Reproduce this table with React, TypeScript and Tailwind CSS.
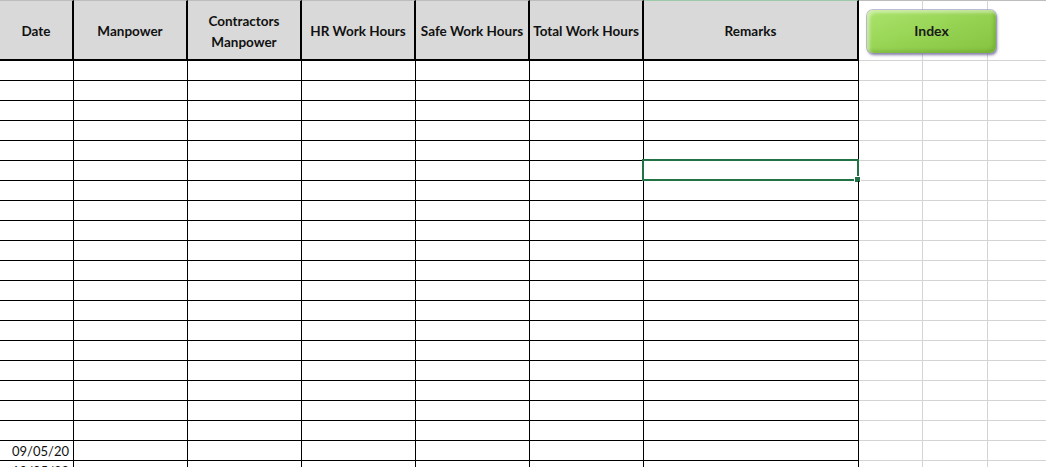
import React from 'react';

const headers = [
  'Date',
  'Manpower',
  'Contractors Manpower',
  'HR Work Hours',
  'Safe Work Hours',
  'Total Work Hours',
  'Remarks',
];

const ROWS = 21;

export default function App() {
  const rows = Array.from({ length: ROWS }, (_, i) => i);

  return (
    <div className="relative w-[1046px] h-[467px] overflow-hidden bg-white font-['Lato',sans-serif] text-[#111]">
      <div className="grid grid-cols-[74px_114px_114px_114px_114px_114px_215px_64px_65px_1fr]">
        {/* Header row */}
        {headers.map((h, i) => (
          <div
            key={h}
            className={`h-[61px] pt-[3px] flex items-center justify-center text-center text-[13.5px] font-bold leading-[21px] bg-[#d9d9d9] border-b-2 border-r-2 border-b-black border-r-black border-t ${
              i === 6 ? 'border-t-[#9cc9a8]' : 'border-t-[#bdbdbd]'
            } ${i === 2 ? 'px-3' : ''}`}
          >
            {h}
          </div>
        ))}
        <div className="h-[61px] border-t border-t-[#bdbdbd] border-b border-r border-[#d4d4d4]" />
        <div className="h-[61px] border-t border-t-[#bdbdbd] border-b border-r border-[#d4d4d4]" />
        <div className="h-[61px] border-t border-t-[#bdbdbd] border-b border-[#d4d4d4]" />

        {/* Body rows */}
        {rows.map((r) => (
          <React.Fragment key={r}>
            {headers.map((h, i) => (
              <div
                key={h}
                className="relative h-[20px] pt-[1px] border-b border-r border-black text-[13px] leading-[19px] text-right pr-[4px] whitespace-nowrap"
              >
                {i === 0 && r === 19 && '09/05/20'}
                {i === 0 && r === 20 && '10/05/20'}
                {i === 6 && r === 5 && (
                  <div className="absolute -left-[2px] -top-[2px] -right-[1px] -bottom-[1px] border-2 border-[#217346]">
                    <div className="absolute -right-[3px] -bottom-[3px] w-[5px] h-[5px] bg-[#217346] outline outline-1 outline-white" />
                  </div>
                )}
              </div>
            ))}
            <div className="h-[20px] border-b border-r border-[#d4d4d4]" />
            <div className="h-[20px] border-b border-r border-[#d4d4d4]" />
            <div className="h-[20px] border-b border-[#d4d4d4]" />
          </React.Fragment>
        ))}
      </div>

      {/* Index button shape */}
      <button className="absolute left-[867px] top-[10px] w-[129px] h-[43px] pb-[2px] rounded-[6px] bg-gradient-to-br from-[#ace46c] via-[#96d353] to-[#84c33f] shadow-[inset_3px_3px_3px_rgba(255,255,255,0.4),inset_-3px_-3px_3px_rgba(40,80,0,0.15),0_0_0_1px_rgba(150,145,185,0.6),1px_2px_3px_rgba(95,85,140,0.8)] text-[14px] font-bold text-[#1a1a1a]">
        Index
      </button>
    </div>
  );
}
